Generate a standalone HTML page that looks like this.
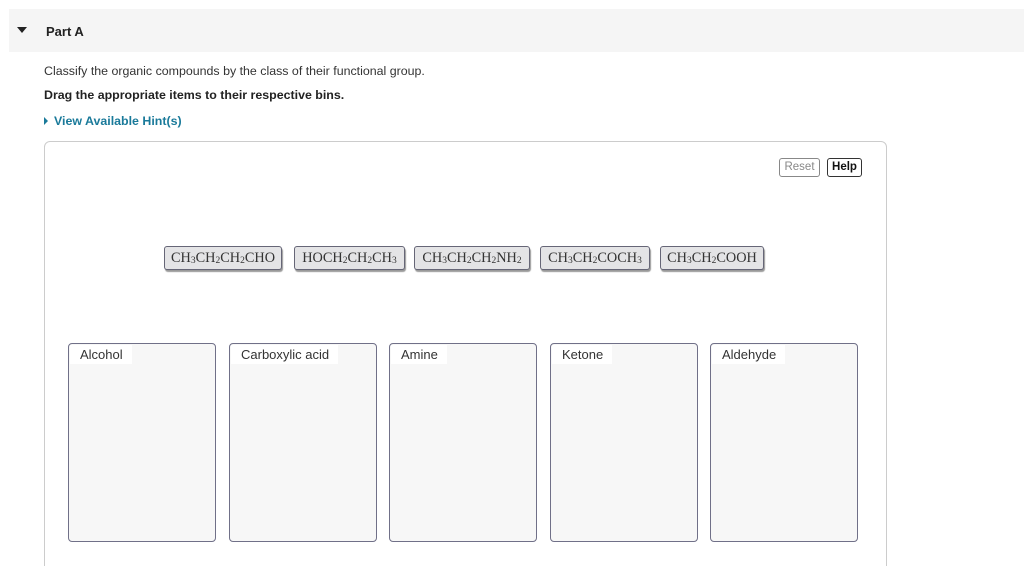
<!DOCTYPE html>
<html style="overflow:hidden;height:566px"><head><meta charset="utf-8"><style>
body{margin:0;width:1024px;height:566px;overflow:hidden;background:#fff;font-family:"Liberation Sans",Arial,sans-serif;position:relative}
.a{position:absolute}
.hdr{left:9px;top:9px;width:1015px;height:43px;background:#f5f5f5}
.it{position:absolute;top:246px;height:22px;border:1px solid #666677;border-radius:3px;background:#e4e4e6;box-shadow:1px 2px 1px #999;font-family:"Liberation Serif",serif;font-size:14.3px;line-height:22px;text-align:center;color:#333;white-space:nowrap}
.it sub{font-size:9.5px;vertical-align:-1px}
.bin{position:absolute;top:343px;width:146px;height:197px;border:1px solid #707088;border-radius:4px;background:#f7f7f7}
.bin span{position:absolute;left:1px;top:1px;background:#fff;padding:2px 9px 2px 10px;font-size:13px;color:#333}
.btn{position:absolute;top:158px;height:17px;border:1px solid #888;border-radius:3px;font-size:11px;line-height:17px;text-align:center;background:#fff}
</style></head><body>
<div class="a hdr"></div>
<svg class="a" style="left:17px;top:27px" width="10" height="7"><path d="M0 0H10L5 6Z" fill="#222"/></svg>
<div class="a" style="left:46px;top:24px;font-size:13px;font-weight:bold;color:#222">Part A</div>
<div class="a" style="left:44px;top:64px;font-size:12.4px;color:#333">Classify the organic compounds by the class of their functional group.</div>
<div class="a" style="left:44px;top:88px;font-size:12.4px;font-weight:bold;color:#222">Drag the appropriate items to their respective bins.</div>
<svg class="a" style="left:44px;top:117px" width="5" height="8"><path d="M0 0V8L4 4Z" fill="#1a7a9a"/></svg>
<div class="a" style="left:54px;top:114px;font-size:12.4px;font-weight:bold;color:#1a7a9a">View Available Hint(s)</div>
<div class="a" style="left:44px;top:141px;width:841px;height:440px;border:1px solid #ccc;border-radius:6px"></div>
<div class="btn" style="left:779px;width:39px;color:#888;font-size:11.5px">Reset</div>
<div class="btn" style="left:827px;width:33px;border-color:#333;font-weight:bold;color:#111;font-size:11.5px">Help</div>
<div class="it" style="left:164px;width:116px">CH<sub>3</sub>CH<sub>2</sub>CH<sub>2</sub>CHO</div>
<div class="it" style="left:294px;width:109px">HOCH<sub>2</sub>CH<sub>2</sub>CH<sub>3</sub></div>
<div class="it" style="left:414px;width:114px">CH<sub>3</sub>CH<sub>2</sub>CH<sub>2</sub>NH<sub>2</sub></div>
<div class="it" style="left:540px;width:108px">CH<sub>3</sub>CH<sub>2</sub>COCH<sub>3</sub></div>
<div class="it" style="left:660px;width:102px">CH<sub>3</sub>CH<sub>2</sub>COOH</div>
<div class="bin" style="left:68px"><span>Alcohol</span></div>
<div class="bin" style="left:229px"><span>Carboxylic acid</span></div>
<div class="bin" style="left:389px"><span>Amine</span></div>
<div class="bin" style="left:550px"><span>Ketone</span></div>
<div class="bin" style="left:710px"><span>Aldehyde</span></div>
</body></html>
